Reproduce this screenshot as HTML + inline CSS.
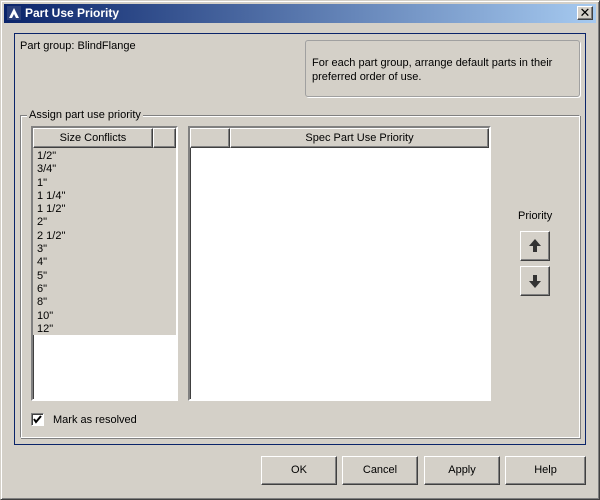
<!DOCTYPE html><html><head><style>
*{margin:0;padding:0;box-sizing:border-box}
body{width:600px;height:500px;background:#d4d0c8;font-family:"Liberation Sans",sans-serif;font-size:11px;color:#000;position:relative;overflow:hidden}
.a{position:absolute}
.sunk2{border:2px solid;border-color:#808080 #fff #fff #808080;box-shadow:inset 1px 1px 0 #404040}
.btn{position:absolute;border:1px solid;border-color:#fff #404040 #404040 #fff;box-shadow:inset -1px -1px 0 #808080;text-align:center;line-height:27px}
.hdr{position:absolute;top:0;height:20px;border:1px solid;border-color:#fff #404040 #404040 #fff;box-shadow:inset -1px -1px 0 #808080;text-align:center;line-height:18px;background:#d4d0c8}
</style></head><body>
<div class="a" style="left:0;top:0;width:600px;height:500px;border:1px solid;border-color:#d4d0c8 #404040 #404040 #d4d0c8;box-shadow:inset 1px 1px 0 #fff,inset -1px -1px 0 #808080"></div>
<div class="a" style="left:4px;top:4px;width:592px;height:19px;background:linear-gradient(90deg,#0a246a,#a6caf0)"></div>
<svg class="a" style="left:7px;top:6px" width="14" height="14"><rect width="14" height="14" fill="#2a3f7a"/><path d="M7 2L2 12h3l2-4 2 4h3z" fill="#fff"/></svg>
<div class="a" style="left:25px;top:6px;color:#fff;font-weight:bold;font-size:12px">Part Use Priority</div>
<div class="btn" style="left:577px;top:6px;width:16px;height:14px;line-height:12px;font-size:13px;background:#d4d0c8">✕</div>
<div class="a" style="left:14px;top:33px;width:572px;height:412px;border:1px solid #0a246a"></div>
<div class="a" style="left:20px;top:40px">Part group: BlindFlange</div>
<div class="a" style="left:305px;top:40px;width:275px;height:57px;border:1px solid #a0a0a0;border-radius:3px;box-shadow:1px 1px 0 #fff;padding:15px 0 0 6px;line-height:14px">For each part group, arrange default parts in their preferred order of use.</div>
<div class="a" style="left:20px;top:115px;width:560px;height:323px;border:1px solid;border-color:#808080 #fff #fff #808080;box-shadow:inset 1px 1px 0 #fff,1px 1px 0 #808080"></div>
<div class="a" style="left:27px;top:109px;padding:0 2px;background:#d4d0c8">Assign part use priority</div>
<div class="a sunk2" style="left:31px;top:126px;width:147px;height:275px;background:#fff">
<div class="hdr" style="left:0;width:120px">Size Conflicts</div>
<div class="hdr" style="left:120px;width:23px"></div>
<div class="a" style="left:0;top:20px;width:143px;height:187px;background:#d4d0c8;padding:2px 0 0 4px;line-height:13.3px">1/2"<br>3/4"<br>1"<br>1 1/4"<br>1 1/2"<br>2"<br>2 1/2"<br>3"<br>4"<br>5"<br>6"<br>8"<br>10"<br>12"</div>
</div>
<div class="a sunk2" style="left:188px;top:126px;width:303px;height:275px;background:#fff">
<div class="hdr" style="left:0;width:40px"></div>
<div class="hdr" style="left:40px;width:259px">Spec Part Use Priority</div>
</div>
<div class="a" style="left:518px;top:210px">Priority</div>
<div class="btn" style="left:520px;top:231px;width:30px;height:30px"><svg width="28" height="28" style="display:block"><path d="M14 7l-6 7h4v6h4v-6h4z" fill="#333"/></svg></div>
<div class="btn" style="left:520px;top:266px;width:30px;height:30px"><svg width="28" height="28" style="display:block"><path d="M14 21l-6-7h4v-6h4v6h4z" fill="#333"/></svg></div>
<div class="a" style="left:31px;top:413px;width:13px;height:13px;background:#fff;border:1px solid;border-color:#808080 #fff #fff #808080;box-shadow:inset 1px 1px 0 #404040"><svg width="11" height="11" style="position:absolute;left:0;top:0"><path d="M2 5l2 3 5-6" stroke="#000" stroke-width="2" fill="none"/></svg></div>
<div class="a" style="left:53px;top:414px">Mark as resolved</div>
<div class="btn" style="left:261px;top:456px;width:76px;height:29px">OK</div>
<div class="btn" style="left:342px;top:456px;width:76px;height:29px">Cancel</div>
<div class="btn" style="left:424px;top:456px;width:76px;height:29px">Apply</div>
<div class="btn" style="left:505px;top:456px;width:81px;height:29px">Help</div>
</body></html>
